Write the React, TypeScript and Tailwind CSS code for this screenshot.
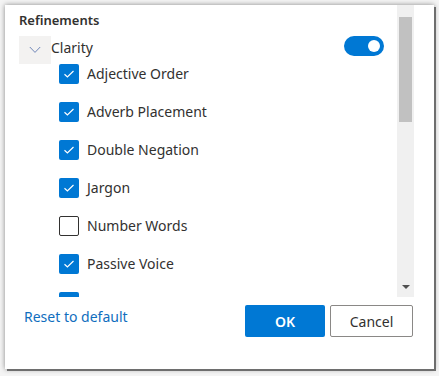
import React, { useState } from 'react';

const items = [
  { label: 'Adjective Order', checked: true },
  { label: 'Adverb Placement', checked: true },
  { label: 'Double Negation', checked: true },
  { label: 'Jargon', checked: true },
  { label: 'Number Words', checked: false },
  { label: 'Passive Voice', checked: true },
  { label: '', checked: true },
];

const Check: React.FC<{ checked: boolean; onClick: () => void }> = ({ checked, onClick }) => (
  <button
    onClick={onClick}
    className={`w-5 h-5 shrink-0 rounded-[2px] flex items-center justify-center ${
      checked ? 'bg-[#0078d4]' : 'bg-white border border-[#323130]'
    }`}
  >
    {checked && (
      <svg width="12" height="12" viewBox="0 0 12 12" fill="none">
        <path d="M1.5 6.3 L4.4 9 L10.5 3" stroke="white" strokeWidth="1.2" />
      </svg>
    )}
  </button>
);

const App: React.FC = () => {
  const [checks, setChecks] = useState(items.map((i) => i.checked));
  const [on, setOn] = useState(true);

  return (
    <div className="w-[439px] h-[376px] bg-[#f4f4f4] pt-[5px] pl-[5px] overflow-hidden" style={{ fontFamily: '"Noto Sans", "Open Sans", sans-serif' }}>
      <div className="w-[429px] h-[364px] bg-white flex flex-col shadow-[2px_2px_0_#6e6e6e,0_0_5px_rgba(0,0,0,0.45)] text-[#323130]">
        <div className="flex h-[292px] pr-[20px]">
          <div className="flex-1 overflow-hidden pl-[14px] pr-[13px]">
            <div className="text-[13px] font-semibold h-[31px] pt-[6px] leading-[18px]">Refinements</div>
            <div className="flex items-center h-[28px]">
              <div className="w-8 h-7 bg-[#f3f2f1] flex items-center justify-center">
                <svg width="12" height="8" viewBox="0 0 12 8" fill="none">
                  <path d="M0.8 1 L6 6.4 L11.2 1" stroke="#6f86b8" strokeWidth="1" />
                </svg>
              </div>
              <span className="text-[14px] flex-1 mb-[5px]">Clarity</span>
              <button
                onClick={() => setOn(!on)}
                className={`w-10 h-5 rounded-full flex items-center px-1 mb-2 ${on ? 'bg-[#0078d4] justify-end' : 'bg-white border border-[#323130] justify-start'}`}
              >
                <span className={`w-3 h-3 rounded-full ${on ? 'bg-white' : 'bg-[#323130]'}`} />
              </button>
            </div>
            <div className="flex flex-col gap-[18px] pl-[40px]">
              {items.map((item, idx) => (
                <div key={idx} className="flex items-center h-5 gap-2">
                  <Check
                    checked={checks[idx]}
                    onClick={() => setChecks(checks.map((c, i) => (i === idx ? !c : c)))}
                  />
                  {item.label && <span className="text-[14px] leading-5">{item.label}</span>}
                </div>
              ))}
            </div>
          </div>
          <div className="w-[17px] bg-[#f0f0f0] flex flex-col items-center">
            <div className="w-[13px] h-[105px] bg-[#c1c1c1] mt-[12px]" />
            <div className="flex-1" />
            <svg width="8" height="5" viewBox="0 0 8 5" className="mb-[7px]">
              <path d="M0 0 H8 L4 4 Z" fill="#505050" />
            </svg>
          </div>
        </div>
        <div className="flex items-start justify-between pl-[19px] pr-[21px] pt-[8px]">
          <button className="text-[14px] text-[#106ebe] pt-[1px]">Reset to default</button>
          <div className="flex gap-[5px]">
            <button className="w-20 h-8 bg-[#0078d4] text-white text-[14px] font-semibold rounded-[2px]">OK</button>
            <button className="w-[83px] h-8 bg-white border border-[#8a8886] text-[14px] rounded-[2px]">Cancel</button>
          </div>
        </div>
      </div>
    </div>
  );
};

export default App;
